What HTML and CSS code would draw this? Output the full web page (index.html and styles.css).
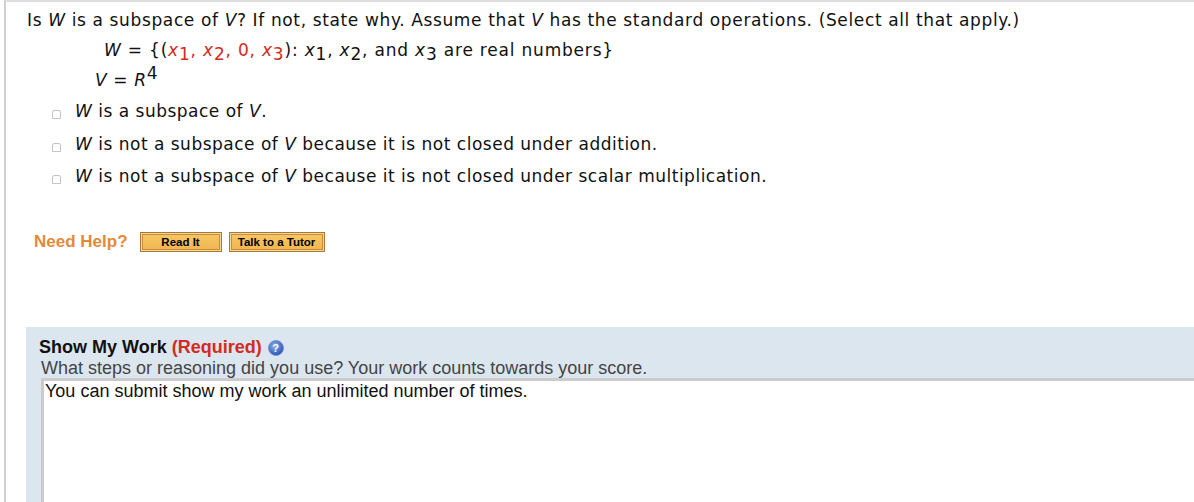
FILE: index.html
```html
<!DOCTYPE html>
<html>
<head>
<meta charset="utf-8">
<link rel="stylesheet" href="styles.css">
</head>
<body>
<div class="page">
  <div class="question">
    <p class="prompt">Is <i>W</i> is a subspace of <i>V</i>? If not, state why. Assume that <i>V</i> has the standard operations. (Select all that apply.)</p>
    <p class="math math-w"><i>W</i> = {(<span class="red"><i>x</i><sub>1</sub>, <i>x</i><sub>2</sub>, 0, <i>x</i><sub>3</sub></span>): <i>x</i><sub>1</sub>, <i>x</i><sub>2</sub>, and <i>x</i><sub>3</sub> are real numbers}</p>
    <p class="math math-v"><i>V</i> = <i>R</i><sup>4</sup></p>
    <ul class="options">
      <li><span class="box"></span><span><i>W</i> is a subspace of <i>V</i>.</span></li>
      <li><span class="box"></span><span><i>W</i> is not a subspace of <i>V</i> because it is not closed under addition.</span></li>
      <li><span class="box"></span><span><i>W</i> is not a subspace of <i>V</i> because it is not closed under scalar multiplication.</span></li>
    </ul>
    <div class="help">
      <span class="need">Need Help?</span>
      <span class="btn btn-read">Read It</span>
      <span class="btn btn-tutor">Talk to a Tutor</span>
    </div>
  </div>
  <div class="work">
    <div class="work-title">Show My Work <span class="req">(Required)</span> <span class="qicon">?</span></div>
    <div class="work-sub">What steps or reasoning did you use? Your work counts towards your score.</div>
    <div class="work-area">You can submit show my work an unlimited number of times.</div>
  </div>
</div>
</body>
</html>
```
FILE: styles.css
```css
html, body {
  margin: 0;
  padding: 0;
  background: #fff;
  height: 100%;
  overflow: hidden;
}
.page {
  margin-left: 4px;
  border-left: 2px solid #cfcfcf;
  border-top: 2px solid #dedede;
  height: 100%;
  box-sizing: border-box;
  display: flex;
  flex-direction: column;
}
.question {
  font-family: "DejaVu Sans", Verdana, sans-serif;
  font-size: 17px;
  letter-spacing: 0.63px;
  color: #111;
  padding-left: 21px;
}
.prompt {
  margin: 0;
  padding-top: 7px;
  line-height: 22px;
}
.math {
  margin: 0;
  line-height: 22px;
}
.math-w {
  padding-left: 77px;
  margin-top: 8px;
  letter-spacing: 0.8px;
}
.math-v {
  padding-left: 68px;
  margin-top: 8px;
}
.red { color: #d32a1e; }
sub {
  font-size: 17px;
  vertical-align: -4px;
  line-height: 0;
}
sup {
  font-size: 17px;
  vertical-align: 7px;
  line-height: 0;
}
.options {
  list-style: none;
  margin: 9px 0 0 0;
  padding: 0 0 0 25px;
  letter-spacing: 0.5px;
}
.options li {
  display: flex;
  align-items: center;
  height: 22px;
  margin-bottom: 10.5px;
}
.box {
  width: 7px;
  height: 7px;
  border: 1px solid #c4c4c4;
  border-radius: 2px 2px 0 0;
  margin-right: 14px;
  margin-top: 7px;
  flex: none;
}
.help {
  display: flex;
  align-items: center;
  margin-top: 45px;
  padding-left: 7px;
  letter-spacing: 0;
}
.need {
  font-family: "Liberation Sans", Arial, sans-serif;
  font-size: 17px;
  font-weight: bold;
  color: #e38a38;
  margin-right: 12px;
}
.btn {
  font-family: "Liberation Sans", Arial, sans-serif;
  font-size: 11.5px;
  font-weight: bold;
  color: #000;
  background: linear-gradient(#f7c866, #f0b550);
  border: 1px solid #a7783a;
  box-shadow: inset 0 0 0 1px #f9d896, inset 0 0 0 2px #c98d3e;
  height: 20px;
  box-sizing: border-box;
  display: flex;
  align-items: center;
  justify-content: center;
  margin-right: 7px;
}
.btn-read { width: 82px; }
.btn-tutor { width: 96px; }
.work {
  margin-top: 75px;
  margin-left: 20px;
  background: #dce6ef;
  font-family: "Liberation Sans", Arial, sans-serif;
  padding-top: 9px;
  flex: 1;
  display: flex;
  flex-direction: column;
  min-height: 0;
}
.work-title {
  font-size: 18px;
  font-weight: bold;
  color: #111;
  padding-left: 13px;
  line-height: 22px;
  display: flex;
  align-items: center;
}
.req {
  color: #d22b22;
  margin-left: 5px;
}
.qicon {
  display: inline-flex;
  align-items: center;
  justify-content: center;
  width: 16px;
  height: 16px;
  border-radius: 50%;
  background: radial-gradient(circle at 40% 35%, #8fb0ec, #2f57b5 75%);
  border: 1px solid #6f8fcf;
  box-shadow: 0 0 0 1px #dbe4f3;
  color: #fff;
  font-size: 11px;
  font-weight: bold;
  margin-left: 6px;
  margin-top: 2px;
  box-sizing: border-box;
}
.work-sub {
  font-size: 18px;
  color: #444;
  padding-left: 15px;
  line-height: 20px;
}
.work-area {
  margin-left: 15px;
  border-top: 3px solid #cbcbcb;
  border-left: 3px solid #cbcbcb;
  background: #fff;
  font-size: 18px;
  color: #111;
  padding: 0 0 0 1px;
  line-height: 20px;
  flex: 1;
}
```
